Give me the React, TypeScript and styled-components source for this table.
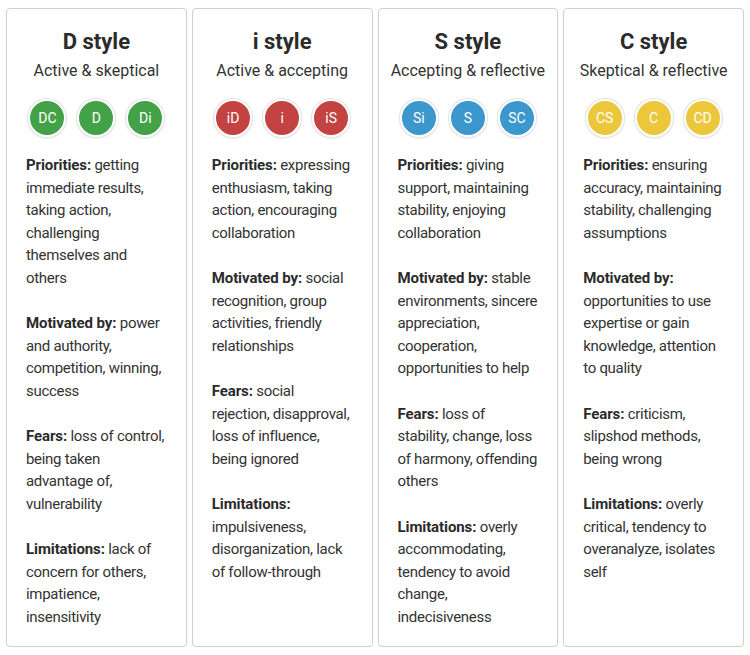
import React from "react";
import styled, { createGlobalStyle } from "styled-components";

const Global = createGlobalStyle`
  html, body { margin: 0; padding: 0; background: #fff; }
  body { font-family: Roboto, "Noto Sans", Arial, sans-serif; color: #333; }
`;

const Page = styled.div`
  display: grid;
  grid-template-columns: repeat(4, 1fr);
  gap: 5px;
  padding: 8px 6px 0 6px;
  width: 750px;
  box-sizing: border-box;
`;

const Card = styled.section`
  border: 1px solid #cfcfcf;
  border-radius: 4px;
  padding: 19px 8px 18px 8px;
  box-shadow: 0 1px 2px rgba(0, 0, 0, 0.06);
  display: flex;
  flex-direction: column;
  height: 639px;
  box-sizing: border-box;
`;

const Title = styled.h2`
  margin: 0;
  font-size: 22px;
  line-height: 28px;
  font-weight: 700;
  text-align: center;
  color: #2b2b2b;
`;

const Subtitle = styled.div`
  margin-top: 3px;
  font-size: 16px;
  line-height: 24px;
  text-align: center;
  white-space: nowrap;
  color: #333;
`;

const Badges = styled.div`
  margin-top: 16px;
  display: flex;
  justify-content: center;
  gap: 11px;
`;

const Badge = styled.div<{ $bg: string }>`
  width: 34px;
  height: 34px;
  border-radius: 50%;
  background: ${(p) => p.$bg};
  border: 2px solid #fff;
  box-shadow: 0 0 0 1px #e4e4e4, 0 1px 3px rgba(0, 0, 0, 0.15);
  color: #fff;
  font-size: 14px;
  display: flex;
  align-items: center;
  justify-content: center;
`;

const Body = styled.div`
  margin-top: 17px;
  padding: 0 10px 0 11px;
  font-size: 15px;
  line-height: 22.6px;
  letter-spacing: -0.3px;
  color: #333;
`;

const Para = styled.p`
  margin: 0 0 22.6px 0;
  &:last-child { margin-bottom: 0; }
  b { font-weight: 700; letter-spacing: -0.1px; color: #2b2b2b; }
`;

type Style = {
  title: string;
  sub: string;
  color: string;
  badges: string[];
  items: [string, string][];
};

const styles: Style[] = [
  {
    title: "D style",
    sub: "Active & skeptical",
    color: "#43a148",
    badges: ["DC", "D", "Di"],
    items: [
      ["Priorities:", "getting immediate results, taking action, challenging themselves and others"],
      ["Motivated by:", "power and authority, competition, winning, success"],
      ["Fears:", "loss of control, being taken advantage of, vulnerability"],
      ["Limitations:", "lack of concern for others, impatience, insensitivity"],
    ],
  },
  {
    title: "i style",
    sub: "Active & accepting",
    color: "#c24341",
    badges: ["iD", "i", "iS"],
    items: [
      ["Priorities:", "expressing enthusiasm, taking action, encouraging collaboration"],
      ["Motivated by:", "social recognition, group activities, friendly relationships"],
      ["Fears:", "social rejection, disapproval, loss of influence, being ignored"],
      ["Limitations:", "impulsiveness, disorganization, lack of follow-through"],
    ],
  },
  {
    title: "S style",
    sub: "Accepting & reflective",
    color: "#3b97cc",
    badges: ["Si", "S", "SC"],
    items: [
      ["Priorities:", "giving support, maintaining stability, enjoying collaboration"],
      ["Motivated by:", "stable environments, sincere appreciation, cooperation, opportunities to help"],
      ["Fears:", "loss of stability, change, loss of harmony, offending others"],
      ["Limitations:", "overly accommodating, tendency to avoid change, indecisiveness"],
    ],
  },
  {
    title: "C style",
    sub: "Skeptical & reflective",
    color: "#ecc73c",
    badges: ["CS", "C", "CD"],
    items: [
      ["Priorities:", "ensuring accuracy, maintaining stability, challenging assumptions"],
      ["Motivated by:", "opportunities to use expertise or gain knowledge, attention to quality"],
      ["Fears:", "criticism, slipshod methods, being wrong"],
      ["Limitations:", "overly critical, tendency to overanalyze, isolates self"],
    ],
  },
];

export default function App() {
  return (
    <>
      <Global />
      <Page>
        {styles.map((s) => (
          <Card key={s.title}>
            <Title>{s.title}</Title>
            <Subtitle>{s.sub}</Subtitle>
            <Badges>
              {s.badges.map((b) => (
                <Badge key={b} $bg={s.color}>
                  {b}
                </Badge>
              ))}
            </Badges>
            <Body>
              {s.items.map(([k, v]) => (
                <Para key={k}>
                  <b>{k}</b> {v}
                </Para>
              ))}
            </Body>
          </Card>
        ))}
      </Page>
    </>
  );
}
